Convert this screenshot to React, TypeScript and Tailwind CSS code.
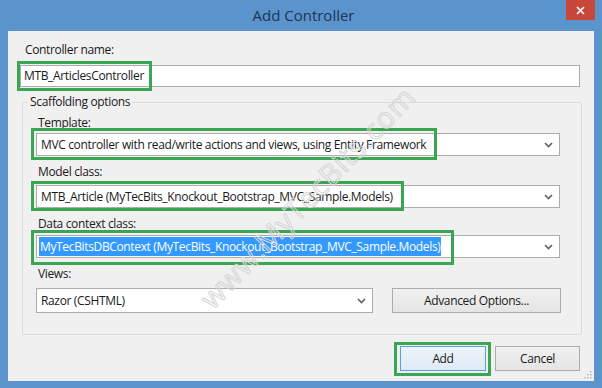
import React from "react";

const font = { fontFamily: '"Open Sans", "Noto Sans", sans-serif' };

function Chevron() {
    return (
        <svg width="9" height="6" viewBox="0 0 9 6" className="shrink-0">
            <path d="M1 1 L4.5 4.5 L8 1" fill="none" stroke="#606060" strokeWidth="1.6"/>
        </svg>
    );
}

function Combo({text, width, selected, children}: { text: string, width: string, selected?: boolean, children?: React.ReactNode }) {
    return (
        <div className={`relative h-[23px] ${width} bg-white border border-[#acacac] flex items-center justify-between pl-[2px] pr-[6px]`}>
            {selected ? (
                <span className="bg-[#3399ff] text-white px-[1px] leading-[19px]">{text}</span>
            ) : (
                <span className="px-[2px] text-[#1a1a1a]">{text}</span>
            )}
            <Chevron/>
            {children}
        </div>
    );
}

function GreenBox({cls}: { cls: string }) {
    return <div className={`absolute border-[3px] border-[#3aa552] pointer-events-none ${cls}`}/>;
}

export default function App() {
    return (
        <div className="w-[602px] h-[388px] bg-[#5b93cd] relative overflow-hidden flex flex-col text-[12px] text-[#1a1a1a] tracking-[-0.35px]" style={font}>
            {/* title bar */}
            <div className="h-[31px] flex items-center justify-center relative shrink-0 pl-[5px]">
                <span className="text-[15px] text-[#1c3657] tracking-normal">Add Controller</span>
                <div className="absolute right-[7px] top-0 w-[29px] h-[20px] bg-[#c7483b] flex items-center justify-center">
                    <svg width="9" height="9" viewBox="0 0 9 9">
                        <path d="M1 1 L8 8 M8 1 L1 8" stroke="white" strokeWidth="1.6"/>
                    </svg>
                </div>
            </div>

            {/* client area */}
            <div className="mx-[8px] h-[350px] bg-[#f0f0f0] relative flex flex-col pt-[11px]">
                <div className="pl-[17px] h-[16px] leading-[16px]">Controller name:</div>
                <div className="relative ml-[12px] mt-[7px] w-[560px] h-[22px] bg-white border border-[#acacac] flex items-center pl-[3px]">
                    MTB_ArticlesController
                    <GreenBox cls="-left-[4px] -top-[5px] w-[135px] h-[30px]"/>
                </div>

                <fieldset className="ml-[14px] mr-[12px] mt-[7px] border border-[#dcdcdc] rounded-[2px] pb-[21px]">
                    <legend className="ml-[5px] px-[2px] h-[16px] leading-[16px]">Scaffolding options</legend>
                    <div className="flex flex-col pt-[5px]">
                        <div className="pl-[15px] h-[16px] leading-[16px]">Template:</div>
                        <div className="ml-[13px] mt-[2px]">
                            <Combo text="MVC controller with read/write actions and views, using Entity Framework" width="w-[524px]">
                                <GreenBox cls="-left-[6px] -top-[6px] w-[406px] h-[32px]"/>
                            </Combo>
                        </div>

                        <div className="pl-[15px] mt-[8px] h-[16px] leading-[16px]">Model class:</div>
                        <div className="ml-[13px] mt-[5px]">
                            <Combo text="MTB_Article (MyTecBits_Knockout_Bootstrap_MVC_Sample.Models)" width="w-[524px]">
                                <GreenBox cls="-left-[6px] -top-[5px] w-[373px] h-[30px]"/>
                            </Combo>
                        </div>

                        <div className="pl-[15px] mt-[8px] h-[16px] leading-[16px]">Data context class:</div>
                        <div className="ml-[13px] mt-[3px]">
                            <Combo text="MyTecBitsDBContext (MyTecBits_Knockout_Bootstrap_MVC_Sample.Models)" width="w-[524px]" selected>
                                <GreenBox cls="-left-[6px] -top-[6px] w-[423px] h-[35px]"/>
                            </Combo>
                        </div>

                        <div className="pl-[15px] mt-[8px] h-[16px] leading-[16px]">Views:</div>
                        <div className="ml-[13px] mt-[6px] flex gap-[19px]">
                            <Combo text="Razor (CSHTML)" width="w-[337px] h-[25px]"/>
                            <button className="w-[169px] h-[25px] border border-[#acacac] bg-gradient-to-b from-[#f0f0f0] to-[#e5e5e5] text-[#1a1a1a]">
                                Advanced Options...
                            </button>
                        </div>
                    </div>
                </fieldset>

                <div className="flex justify-end gap-[9px] pr-[14px] mt-[11px]">
                    <div className="relative">
                        <button className="w-[86px] h-[25px] border border-[#5c9ee0] bg-gradient-to-b from-[#eef4fb] to-[#dfeaf6] text-[#1a1a1a]">
                            Add
                        </button>
                        <GreenBox cls="-left-[6px] -top-[4px] w-[97px] h-[34px]"/>
                    </div>
                    <button className="w-[85px] h-[25px] border border-[#acacac] bg-gradient-to-b from-[#f0f0f0] to-[#e5e5e5] text-[#1a1a1a]">
                        Cancel
                    </button>
                </div>

                {/* resize grip */}
                <svg className="absolute right-[2px] bottom-[2px]" width="10" height="10" viewBox="0 0 10 10">
                    <g fill="#b8b8b8">
                        <rect x="8" y="2" width="1.5" height="1.5"/>
                        <rect x="5" y="5" width="1.5" height="1.5"/>
                        <rect x="8" y="5" width="1.5" height="1.5"/>
                        <rect x="2" y="8" width="1.5" height="1.5"/>
                        <rect x="5" y="8" width="1.5" height="1.5"/>
                        <rect x="8" y="8" width="1.5" height="1.5"/>
                    </g>
                </svg>

                {/* watermark */}
                <div className="absolute left-[299px] top-[166px] -translate-x-1/2 -translate-y-1/2 -rotate-[46deg] text-[29px] tracking-[1px] text-transparent [-webkit-text-stroke:1px_#d6d6d6] whitespace-nowrap pointer-events-none">
                    www.MyTecBits.com
                </div>
            </div>
        </div>
    );
}
